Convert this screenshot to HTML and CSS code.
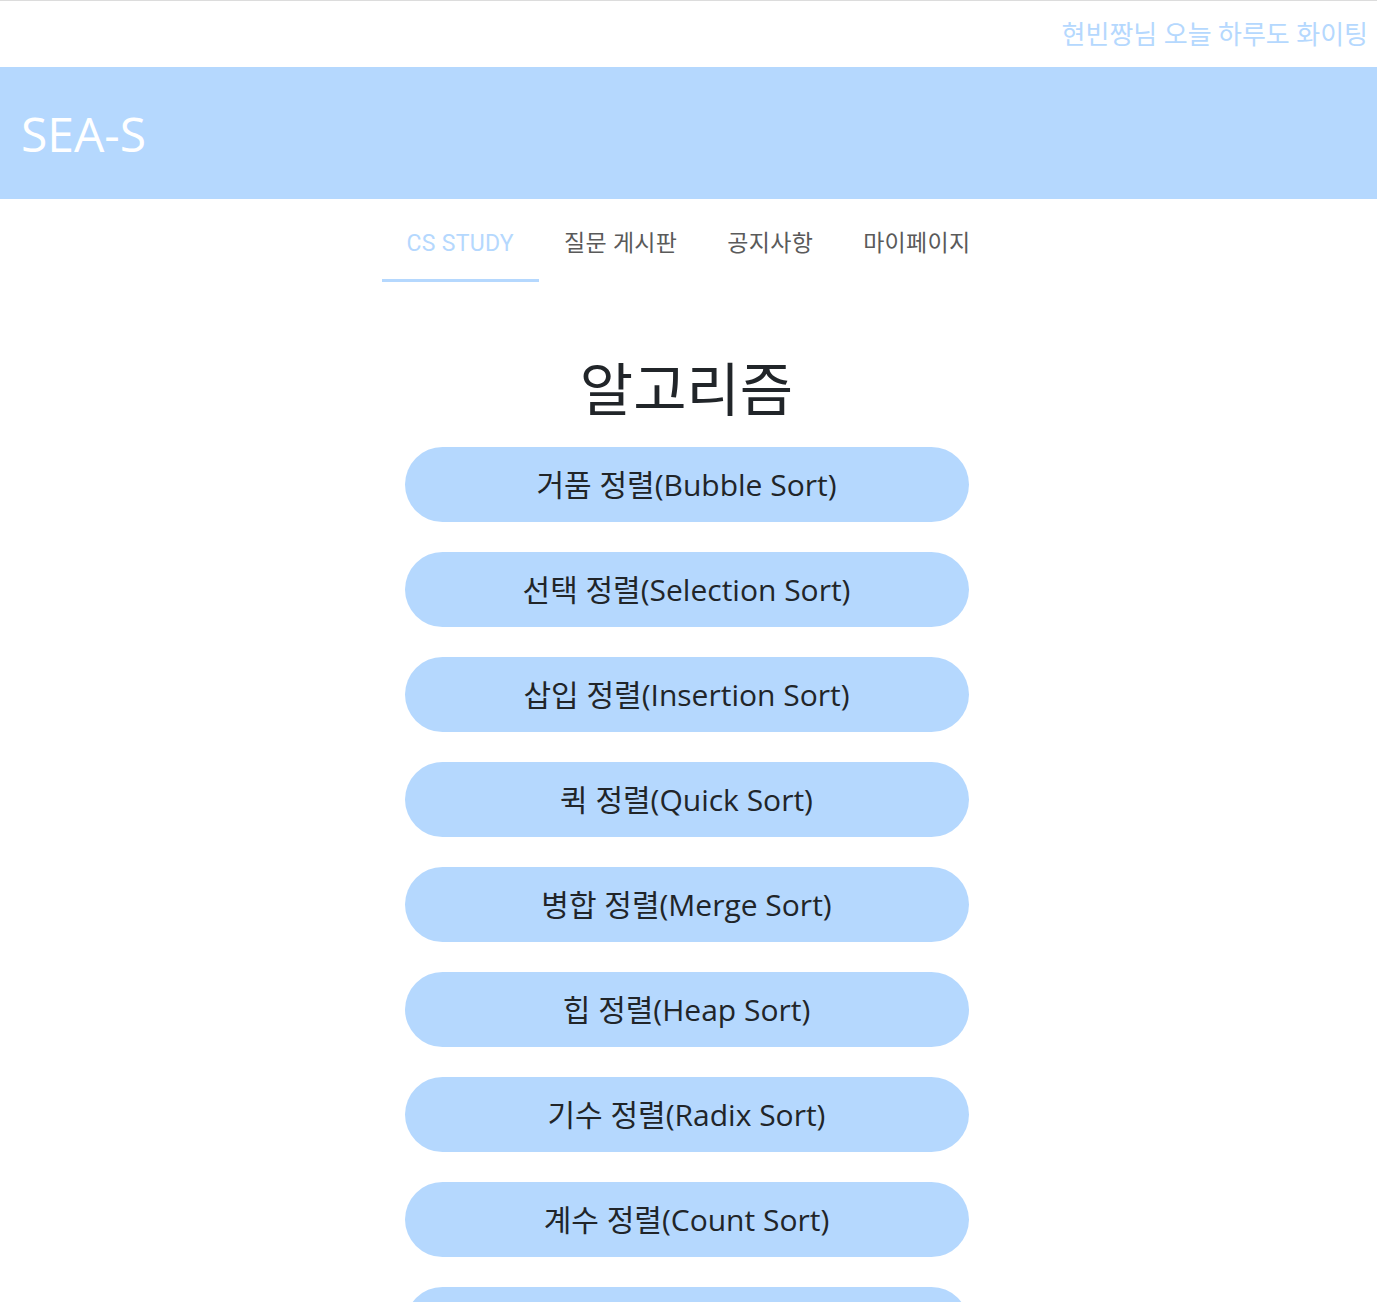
FILE: index.html
```html
<!DOCTYPE html>
<html lang="ko">
<head>
    <meta charset="UTF-8">
    <meta name="viewport" content="width=device-width, initial-scale=1.0">
    <title>SEA-S - CS STUDY</title>
    <link rel="stylesheet" href="styles.css">
</head>
<body>
    <div class="top-bar">
        <span class="greeting">현빈짱님 오늘 하루도 화이팅</span>
    </div>

    <div class="header">
        <h1 class="logo">SEA-S</h1>
    </div>

    <nav class="tabs">
        <a class="tab active" href="#">CS STUDY</a>
        <a class="tab" href="#">질문 게시판</a>
        <a class="tab" href="#">공지사항</a>
        <a class="tab" href="#">마이페이지</a>
    </nav>

    <div class="study">
        <h2 class="study-title">알고리즘</h2>
        <div class="topic-list">
            <button class="topic">거품 정렬(Bubble Sort)</button>
            <button class="topic">선택 정렬(Selection Sort)</button>
            <button class="topic">삽입 정렬(Insertion Sort)</button>
            <button class="topic">퀵 정렬(Quick Sort)</button>
            <button class="topic">병합 정렬(Merge Sort)</button>
            <button class="topic">힙 정렬(Heap Sort)</button>
            <button class="topic">기수 정렬(Radix Sort)</button>
            <button class="topic">계수 정렬(Count Sort)</button>
            <button class="topic">이진 탐색(Binary Search)</button>
        </div>
    </div>
</body>
</html>
```

FILE: styles.css
```css
body {
    margin: 0;
    font-family: "Noto Sans", "Noto Sans CJK KR", sans-serif;
    color: #212529;
    background: #fff;
}
.top-bar {
    height: 63px;
    border-top: 1px solid #dcdcdc;
    display: flex;
    align-items: center;
    justify-content: flex-end;
    padding: 0 9px 3px 0;
}
.greeting {
    font-family: Roboto, "Noto Sans CJK KR", sans-serif;
    font-size: 26px;
    color: #b5d8fe;
}
.header {
    height: 132px;
    background: #b5d8fe;
    display: flex;
    align-items: center;
    padding-left: 21px;
}
.logo {
    margin: 0;
    font-family: "Open Sans", "Noto Sans CJK KR", sans-serif;
    font-weight: 400;
    font-size: 48px;
    color: #fff;
}
.tabs {
    display: flex;
    justify-content: center;
}
.tab {
    font-family: Roboto, "Noto Sans CJK KR", sans-serif;
    font-size: 23px;
    line-height: 28px;
    letter-spacing: 0.3px;
    color: #5a5a5a;
    text-decoration: none;
    padding: 31px 25px 21px;
    border-bottom: 3px solid transparent;
}
.tab.active {
    color: #b5d8fe;
    border-bottom-color: #b5d8fe;
}
.study {
    display: flex;
    flex-direction: column;
    align-items: center;
    padding-right: 4px;
}
.study-title {
    margin: 69px 0 26px;
    font-size: 58px;
    font-weight: 400;
    line-height: 70px;
    font-family: "Noto Sans CJK KR", sans-serif;
}
.topic-list {
    display: flex;
    flex-direction: column;
    gap: 30px;
}
.topic {
    width: 564px;
    height: 75px;
    border: none;
    border-radius: 38px;
    background: #b5d8fe;
    color: #212529;
    font-family: "Open Sans", "Noto Sans CJK KR", sans-serif;
    font-size: 30px;
    padding: 0 0 3px;
    cursor: pointer;
}
```
